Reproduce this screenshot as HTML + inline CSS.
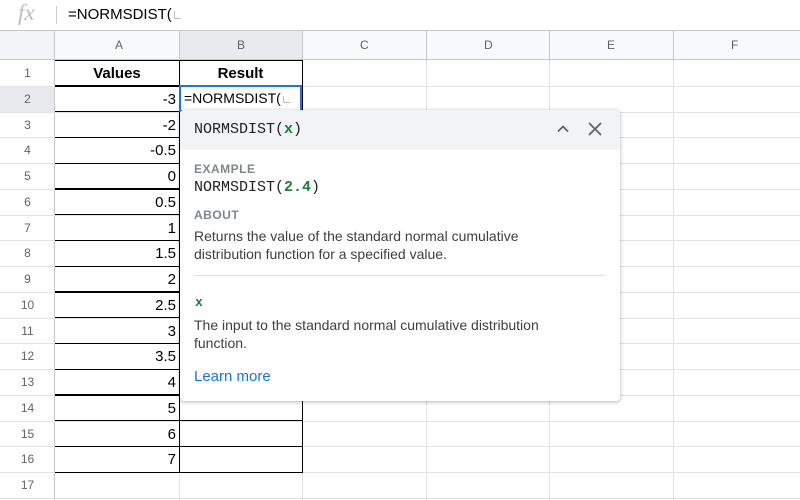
<!DOCTYPE html>
<html><head><style>
*{margin:0;padding:0;box-sizing:border-box}
body{width:800px;height:500px;overflow:hidden;background:#fff;font-family:"Liberation Sans",Arial,sans-serif;position:relative}
.a{position:absolute;white-space:nowrap}
.hl{position:absolute;height:1px;background:#e2e2e2}
.vl{position:absolute;width:1px;background:#e2e2e2}
.bk{position:absolute;background:#000}
.rn{position:absolute;left:0;width:55px;text-align:center;font-size:12px;color:#5f6368}
.v{position:absolute;left:55px;width:121px;text-align:right;font-size:15px;color:#000}
.mono{font-family:"Liberation Mono",monospace}
</style></head><body>
<div class="a" style="left:18px;top:0px;font-family:'Liberation Serif',serif;font-style:italic;font-size:23px;color:#bdbdbd">fx</div>
<div class="a" style="left:56px;top:6px;width:1px;height:18px;background:#ccc"></div>
<div class="a" style="left:68px;top:6px;font-size:15px;color:#000">=NORMSDIST(<span style="display:inline-block;width:7px;height:8px;border-left:1px solid #bbb;border-bottom:1px solid #bbb;margin-left:2px"></span></div>
<div class="hl" style="left:0;top:30px;width:800px;background:#c7c7c7"></div>
<div class="a" style="left:0;top:31px;width:800px;height:29px;background:#f8f9fa"></div>
<div class="a" style="left:0;top:31px;width:55px;height:29px;background:#f1f3f4"></div>
<div class="a" style="left:179px;top:31px;width:123px;height:29px;background:#e8eaed"></div>
<div class="a" style="left:0;top:86px;width:55px;height:25.75px;background:#e8eaed"></div>
<div class="a" style="left:0;top:31px;width:55px;height:469px;border-right:1px solid #c7c7c7;background:transparent"></div>
<div class="hl" style="left:0;top:59px;width:800px;background:#c7c7c7"></div>
<div class="a" style="left:115px;top:38px;font-size:12px;color:#5f6368">A</div>
<div class="a" style="left:237px;top:38px;font-size:12px;color:#5f6368">B</div>
<div class="a" style="left:360px;top:38px;font-size:12px;color:#5f6368">C</div>
<div class="a" style="left:484px;top:38px;font-size:12px;color:#5f6368">D</div>
<div class="a" style="left:607px;top:38px;font-size:12px;color:#5f6368">E</div>
<div class="a" style="left:731px;top:38px;font-size:12px;color:#5f6368">F</div>
<div class="vl" style="left:179px;top:31px;height:29px;background:#c7c7c7"></div>
<div class="vl" style="left:302px;top:31px;height:29px;background:#c7c7c7"></div>
<div class="vl" style="left:426px;top:31px;height:29px;background:#c7c7c7"></div>
<div class="vl" style="left:549px;top:31px;height:29px;background:#c7c7c7"></div>
<div class="vl" style="left:673px;top:31px;height:29px;background:#c7c7c7"></div>
<div class="vl" style="left:302px;top:60px;height:440px"></div>
<div class="vl" style="left:426px;top:60px;height:440px"></div>
<div class="vl" style="left:549px;top:60px;height:440px"></div>
<div class="vl" style="left:673px;top:60px;height:440px"></div>
<div class="vl" style="left:179px;top:472px;height:28px"></div>
<div id="rows"></div>
<script>
var vals=["Values","-3","-2","-0.5","0","0.5","1","1.5","2","2.5","3","3.5","4","5","6","7",""];
var h="";
for(var r=1;r<=17;r++){var t=60+(r-1)*25.75;
h+='<div class="hl" style="left:0;top:'+(t+25.75).toFixed(1)+'px;width:800px"></div>';
h+='<div class="rn" style="top:'+(t+6)+'px">'+r+'</div>';
if(r==1)h+='<div class="a" style="left:55px;width:124px;text-align:center;top:'+(t+5)+'px;font-size:15px;font-weight:bold">Values</div><div class="a" style="left:179px;width:123px;text-align:center;top:'+(t+5)+'px;font-size:15px;font-weight:bold">Result</div>';
else if(r<17)h+='<div class="v" style="top:'+(t+5)+'px">'+vals[r-1]+'</div>';
}
for(var r=0;r<=16;r++){var t=60+r*25.75;h+='<div class="bk" style="left:55px;top:'+(t-0.5).toFixed(1)+'px;width:248px;height:1.3px"></div>';}
h+='<div class="bk" style="left:178.5px;top:60px;width:1.3px;height:412px"></div>';
h+='<div class="bk" style="left:302px;top:60px;width:1.3px;height:412px"></div>';
document.getElementById("rows").innerHTML=h;
</script>
<div class="a" style="left:179px;top:85px;width:123px;height:27px;border:2px solid #1a73e8;background:#fff"></div>
<div class="a" style="left:184px;top:90px;font-size:14px;color:#000">=NORMSDIST(<span style="display:inline-block;width:7px;height:7px;border-left:1px solid #bbb;border-bottom:1px solid #bbb;margin-left:2px"></span></div>
<div class="a" style="left:180px;top:110px;width:440px;height:291px;background:#fff;border-radius:4px;box-shadow:0 1px 4px rgba(0,0,0,.3);overflow:hidden">
<div style="height:40px;background:#f1f3f4"></div>
</div>
<div class="a mono" style="left:194px;top:121px;font-size:15px;color:#202124">NORMSDIST(<b style="color:#188038">x</b>)</div>
<svg class="a" style="left:556px;top:122px" width="14" height="14" viewBox="0 0 14 14"><path d="M2 9.5L7 4.5L12 9.5" fill="none" stroke="#5f6368" stroke-width="1.8"/></svg>
<svg class="a" style="left:586px;top:120px" width="18" height="18" viewBox="0 0 18 18"><path d="M3 3L15 15M15 3L3 15" fill="none" stroke="#5f6368" stroke-width="1.8"/></svg>
<div class="a" style="left:194px;top:162px;font-size:12px;font-weight:bold;color:#80868b;letter-spacing:.5px">EXAMPLE</div>
<div class="a mono" style="left:194px;top:179px;font-size:15px;color:#202124">NORMSDIST(<b style="color:#188038">2.4</b>)</div>
<div class="a" style="left:194px;top:208px;font-size:12px;font-weight:bold;color:#80868b;letter-spacing:.5px">ABOUT</div>
<div class="a" style="left:194px;top:227px;font-size:14px;line-height:18px;color:#3c4043">Returns the value of the standard normal cumulative<br>distribution function for a specified value.</div>
<div class="a" style="left:194px;top:275px;width:411px;height:1px;background:#dadce0"></div>
<div class="a mono" style="left:195px;top:295px;font-size:13px;font-weight:bold;color:#188038">x</div>
<div class="a" style="left:194px;top:316px;font-size:14px;line-height:18px;color:#3c4043">The input to the standard normal cumulative distribution<br>function.</div>
<div class="a" style="left:194px;top:368px;font-size:15px;color:#1a73e8">Learn more</div>
</body></html>
